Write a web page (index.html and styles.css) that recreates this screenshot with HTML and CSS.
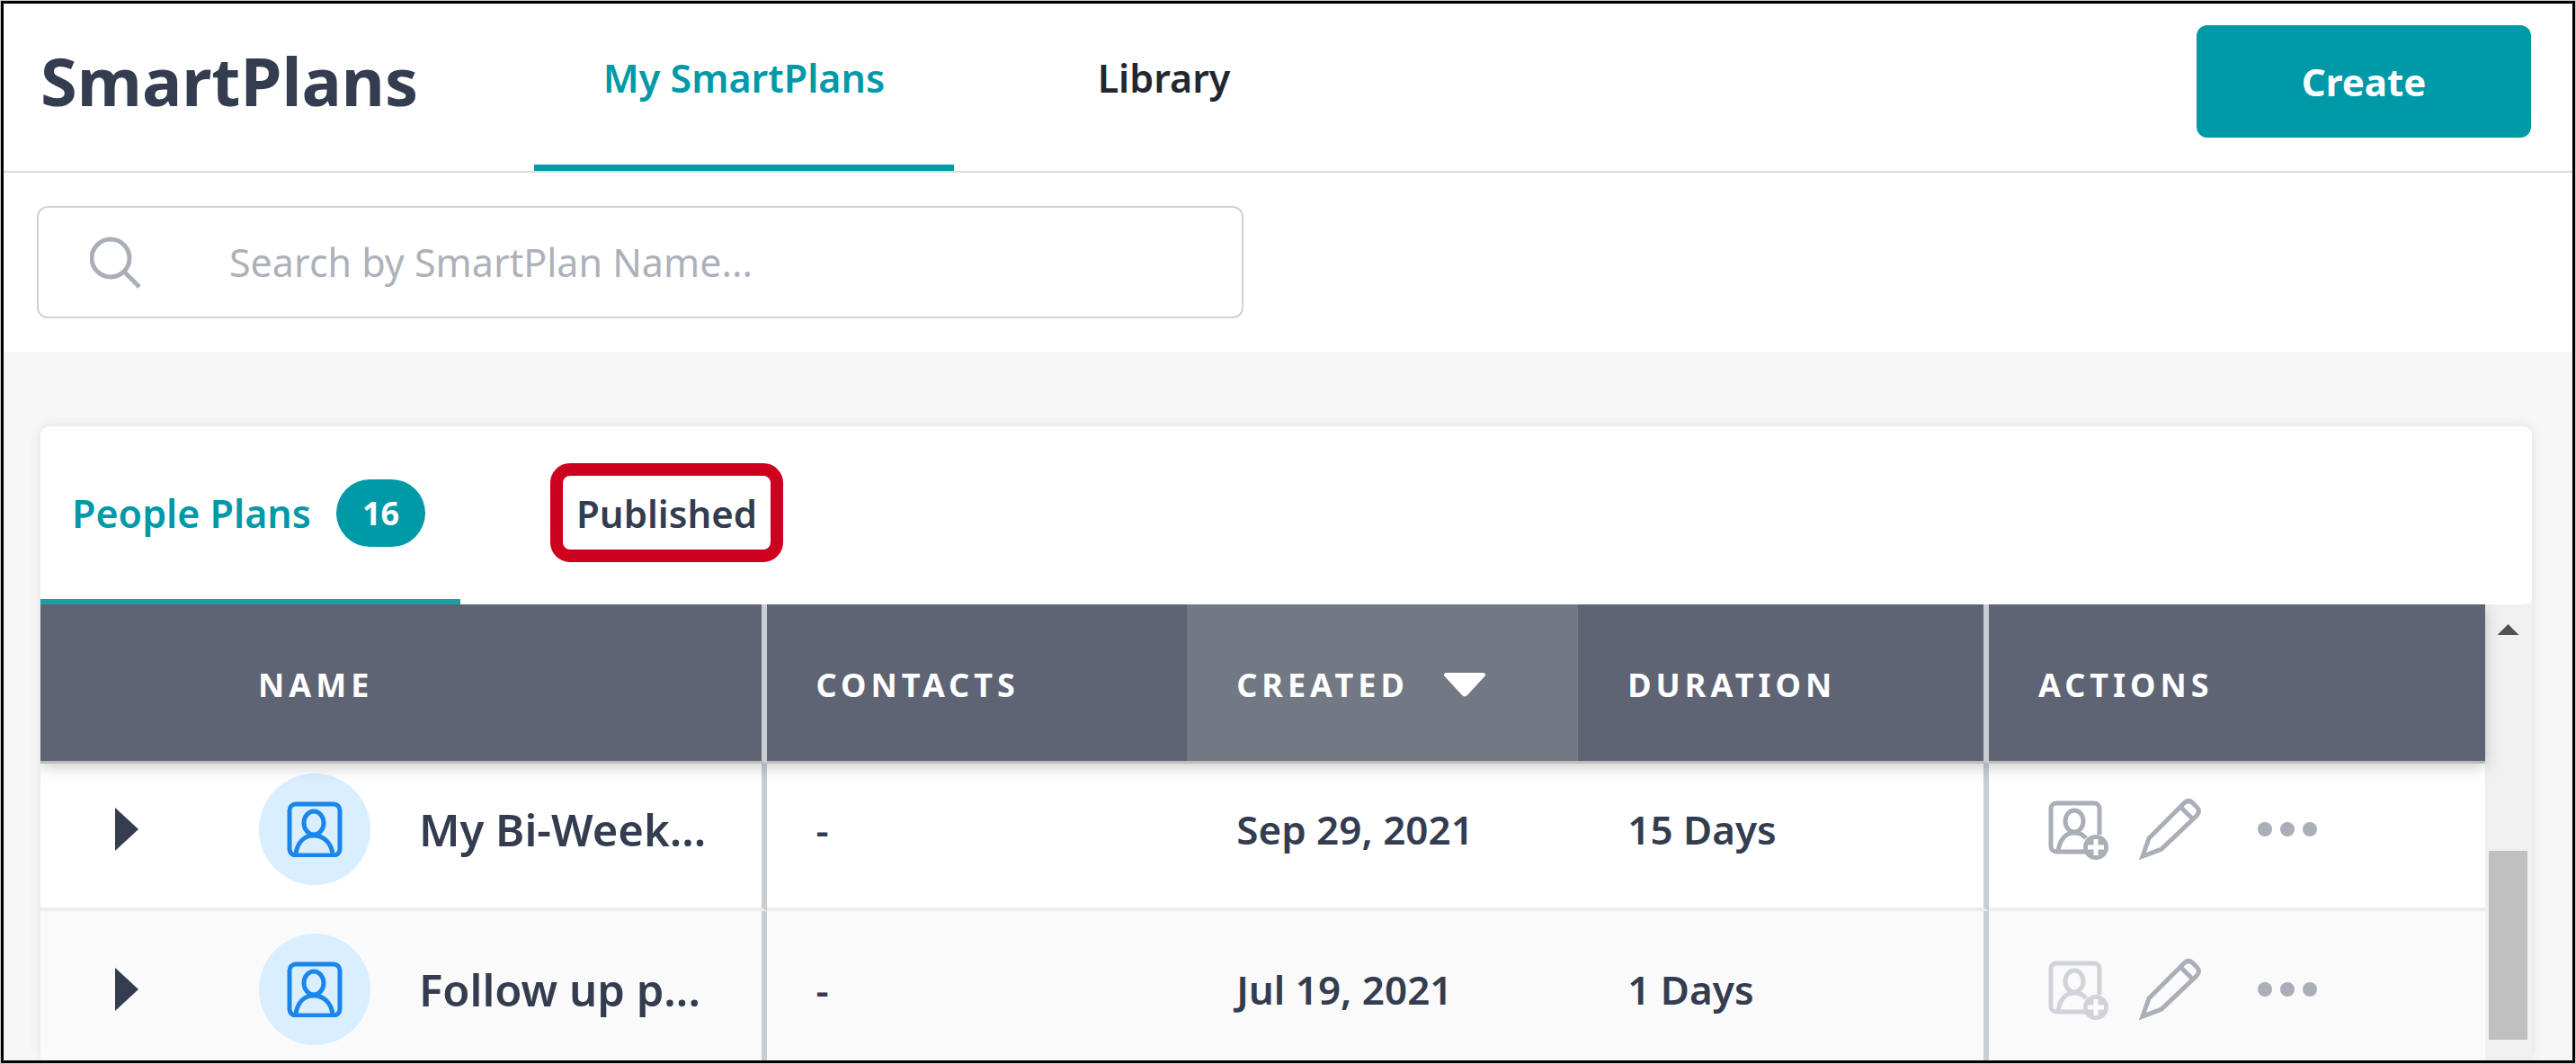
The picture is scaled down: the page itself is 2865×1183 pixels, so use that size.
FILE: index.html
```html
<!DOCTYPE html>
<html lang="en">
<head>
	<meta charset="utf-8">
	<title>SmartPlans</title>
	<link rel="stylesheet" href="styles.css">
</head>
<body>

	<!-- shared icons -->
	<svg class="sprite" aria-hidden="true">
		<symbol id="person" viewBox="0 0 62 62">
			<rect x="3" y="3" width="56" height="57" rx="7"/>
			<ellipse cx="30" cy="24" rx="11" ry="13"/>
			<path d="M10 58c2-12 9-20 20-20s19 8 21 20"/>
		</symbol>
		<symbol id="addPerson" viewBox="0 0 80 70">
			<path d="M55 60H20a6 6 0 0 1-6-6V12a6 6 0 0 1 6-6h42a6 6 0 0 1 6 6v29"/>
			<ellipse cx="40" cy="26" rx="10" ry="12"/>
			<path d="M22 59c2-12 8-20 18-20 6 0 10 2 13 6"/>
			<circle class="dot" cx="64" cy="55" r="14"/>
			<path class="plus" d="M64 46v18M55 55h18"/>
		</symbol>
		<symbol id="pencil" viewBox="0 0 70 70">
			<path d="M4 65l7-20L50 6q5-5 10 0l4 4q5 5 0 10L25 57zM46 10l13 13"/>
		</symbol>
		<symbol id="dots" viewBox="0 0 70 70">
			<circle class="dot" cx="10" cy="35" r="8"/>
			<circle class="dot" cx="35" cy="35" r="8"/>
			<circle class="dot" cx="60" cy="35" r="8"/>
		</symbol>
	</svg>

	<header class="topbar">
		<h1 class="title">SmartPlans</h1>
		<nav class="nav">
			<a href="#" class="navTab active">My SmartPlans</a>
			<a href="#" class="navTab">Library</a>
		</nav>
		<button class="createButton">Create</button>
	</header>

	<div class="searchBar">
		<label class="searchBox">
			<svg class="searchIcon" viewBox="0 0 60 60"><circle cx="23" cy="25" r="21"/><path d="M38 40l17 17"/></svg>
			<input type="text" class="searchInput" placeholder="Search by SmartPlan Name..." aria-label="Search by SmartPlan Name">
		</label>
	</div>

	<main class="content">
		<section class="card">
			<div class="planTabs">
				<button class="planTab active">People Plans <span class="badge">16</span></button>
				<button class="planTab highlight">Published</button>
			</div>

			<div class="tableArea">
				<table class="plans">
					<thead>
						<tr>
							<th class="colName">Name</th>
							<th class="colContacts">Contacts</th>
							<th class="colCreated sorted">Created <svg class="sortArrow" viewBox="0 0 48 28"><path d="M0 3q0-3 3-3h42q3 0 3 3L27 26q-3 3-6 0z"/></svg></th>
							<th class="colDuration">Duration</th>
							<th class="colActions">Actions</th>
						</tr>
					</thead>
					<tbody>
						<tr>
							<td class="colName">
								<div class="nameCell">
									<button class="expand" aria-label="Expand"></button>
									<span class="avatar"><svg><use href="#person"/></svg></span>
									<span class="planName">My Bi-Week...</span>
								</div>
							</td>
							<td>-</td>
							<td>Sep 29, 2021</td>
							<td class="colDuration">15 Days</td>
							<td>
								<div class="actions">
									<button class="addButton" aria-label="Add contact"><svg><use href="#addPerson"/></svg></button>
									<button class="editButton" aria-label="Edit"><svg><use href="#pencil"/></svg></button>
									<button class="moreButton" aria-label="More"><svg><use href="#dots"/></svg></button>
								</div>
							</td>
						</tr>
						<tr>
							<td class="colName">
								<div class="nameCell">
									<button class="expand" aria-label="Expand"></button>
									<span class="avatar"><svg><use href="#person"/></svg></span>
									<span class="planName">Follow up p...</span>
								</div>
							</td>
							<td>-</td>
							<td>Jul 19, 2021</td>
							<td class="colDuration">1 Days</td>
							<td>
								<div class="actions">
									<button class="addButton" aria-label="Add contact" disabled><svg><use href="#addPerson"/></svg></button>
									<button class="editButton" aria-label="Edit"><svg><use href="#pencil"/></svg></button>
									<button class="moreButton" aria-label="More"><svg><use href="#dots"/></svg></button>
								</div>
							</td>
						</tr>
					</tbody>
				</table>
				<div class="scrollbar">
					<div class="scrollUp"></div>
					<div class="thumb"></div>
				</div>
			</div>
		</section>
	</main>

</body>
</html>
```
FILE: styles.css
```css
* {
	box-sizing: border-box;
}
html {
	padding: 1px;
	background: #c8cfcb;
}
body {
	margin: 0;
	height: calc(100vh - 2px);
	border: 3px solid #000;
	background: #fff;
	display: flex;
	flex-direction: column;
	overflow: hidden;
	font-family: "Noto Sans", sans-serif;
	font-size: 43px;
	font-weight: 600;
	color: #343d50;
}
button, input {
	font: inherit;
	color: inherit;
	background: none;
	border: 0;
	padding: 0;
	margin: 0;
}
svg {
	display: block;
}
.sprite {
	position: absolute;
	width: 0;
	height: 0;
}

/* top bar */
.topbar {
	display: flex;
	align-items: flex-start;
	padding: 0 46px 0 41px;
	border-bottom: 2px solid #dadbdc;
}
.title {
	margin: 0;
	width: 549px;
	font-size: 74px;
	font-weight: 700;
	line-height: 172px;
}
.nav {
	display: flex;
	flex: 1;
}
.navTab {
	width: 467px;
	padding-bottom: 13px;
	border-bottom: 7px solid transparent;
	line-height: 166px;
	text-align: center;
	text-decoration: none;
	color: #23272f;
}
.navTab.active {
	color: #0099a8;
	border-color: #0099a8;
}
.createButton {
	width: 372px;
	height: 125px;
	margin-top: 24px;
	border-radius: 12px;
	background: #0099a8;
	color: #fff;
	font-size: 42px;
	font-weight: 700;
}

/* search */
.searchBar {
	padding: 37px;
}
.searchBox {
	display: flex;
	align-items: center;
	width: calc(48% + 6px);
	height: 125px;
	padding: 0 57px;
	border: 2px solid #ced3d7;
	border-radius: 12px;
}
.searchIcon {
	width: 60px;
	height: 60px;
	fill: none;
	stroke: #aaaeb8;
	stroke-width: 5;
}
.searchInput {
	flex: 1;
	padding-left: 95px;
	font-weight: 400;
	outline: none;
}
.searchInput::placeholder {
	color: #adb1ba;
	opacity: 1;
}

/* card */
.content {
	flex: 1;
	min-height: 0;
	padding: 83px 45px 0 41px;
	background: #f7f7f7;
}
.card {
	height: 100%;
	display: flex;
	flex-direction: column;
	border-radius: 10px;
	box-shadow: 0 0 14px rgba(50, 60, 80, 0.12);
}
.planTabs {
	display: flex;
	align-items: center;
	height: 198px;
	padding-bottom: 6px;
	border-radius: 10px;
	background: #fff;
}
.planTab {
	display: flex;
	align-items: center;
	justify-content: center;
}
.planTab.active {
	align-self: stretch;
	justify-content: flex-start;
	width: 467px;
	margin-bottom: -6px;
	padding-left: 35px;
	border-bottom: 6px solid #1a9ea9;
	color: #0099a8;
}
.badge {
	margin-left: 28px;
	padding: 0 29px;
	border-radius: 38px;
	background: #0099a8;
	color: #fff;
	font-size: 36px;
	font-weight: 700;
	line-height: 75px;
}
.planTab.highlight {
	height: 110px;
	margin-left: 100px;
	padding: 0 15px;
	border: 14px solid #ce001f;
	border-radius: 22px;
	font-size: 42px;
}

/* table */
.tableArea {
	flex: 1;
	min-height: 0;
	display: flex;
	align-items: stretch;
	overflow: hidden;
}
.plans {
	flex: 1;
	align-self: flex-start;
	table-layout: fixed;
	border-spacing: 0;
	background: #fff;
}
th, td {
	padding: 0 0 0 55px;
	text-align: left;
}
thead {
	position: relative;
	box-shadow: 0 4px 16px rgba(0, 0, 0, 0.2);
}
th {
	height: 177px;
	padding-top: 4px;
	background: #5f6474;
	border-bottom: 3px solid #b9bcbf;
	color: #fff;
	font-size: 36px;
	font-weight: 700;
	letter-spacing: 5px;
	text-transform: uppercase;
}
th.sorted {
	background: #727884;
}
.colName {
	width: 29.7%;
	padding-left: 83px;
	border-right: 6px solid #c9ced2;
}
th.colName {
	padding-left: 242px;
}
.colContacts {
	width: 17.2%;
}
.colCreated {
	width: 16%;
}
.colDuration {
	width: 16.8%;
	border-right: 6px solid #c9ced2;
}
.sortArrow {
	display: inline-block;
	width: 48px;
	height: 27px;
	margin-left: 24px;
	fill: #fff;
}
td {
	height: 178px;
	border-bottom: 4px solid #ececec;
	font-size: 44px;
}
/* first row is partly scrolled under the header */
tbody tr:first-child td {
	height: 164px;
	padding-bottom: 14px;
}
tbody tr:nth-child(even) {
	background: #fafafa;
}
.nameCell {
	display: flex;
	align-items: center;
}
.expand {
	width: 26px;
	height: 48px;
	background: #343d50;
	clip-path: polygon(0 0, 100% 50%, 0 100%);
}
.avatar {
	display: flex;
	align-items: center;
	justify-content: center;
	width: 124px;
	height: 124px;
	margin: 0 54px 0 134px;
	border-radius: 50%;
	background: #d9eeff;
}
.avatar svg {
	width: 62px;
	height: 62px;
	fill: none;
	stroke: #1b86ea;
	stroke-width: 5;
}
.planName {
	font-size: 49px;
	white-space: nowrap;
}
.actions {
	display: flex;
	align-items: center;
}
.actions svg {
	width: 70px;
	height: 70px;
	fill: none;
	stroke: #aaaeb8;
	stroke-width: 5;
}
.actions .addButton svg {
	width: 80px;
}
.editButton {
	margin: 0 60px 0 32px;
}
.actions button:disabled {
	opacity: 0.5;
}
.actions .dot {
	stroke: none;
}
.dot {
	fill: #aaaeb8;
	stroke: none;
}
.plus {
	stroke: #fff;
}

/* scrollbar */
.scrollbar {
	width: 52px;
	padding: 22px 5px 0 4px;
	background: #f0f0f0;
}
.scrollUp {
	width: 24px;
	height: 12px;
	margin: 0 auto 240px;
	background: #505050;
	clip-path: polygon(50% 0, 100% 100%, 0 100%);
}
.thumb {
	height: 210px;
	background: #c0c0c0;
}
```
